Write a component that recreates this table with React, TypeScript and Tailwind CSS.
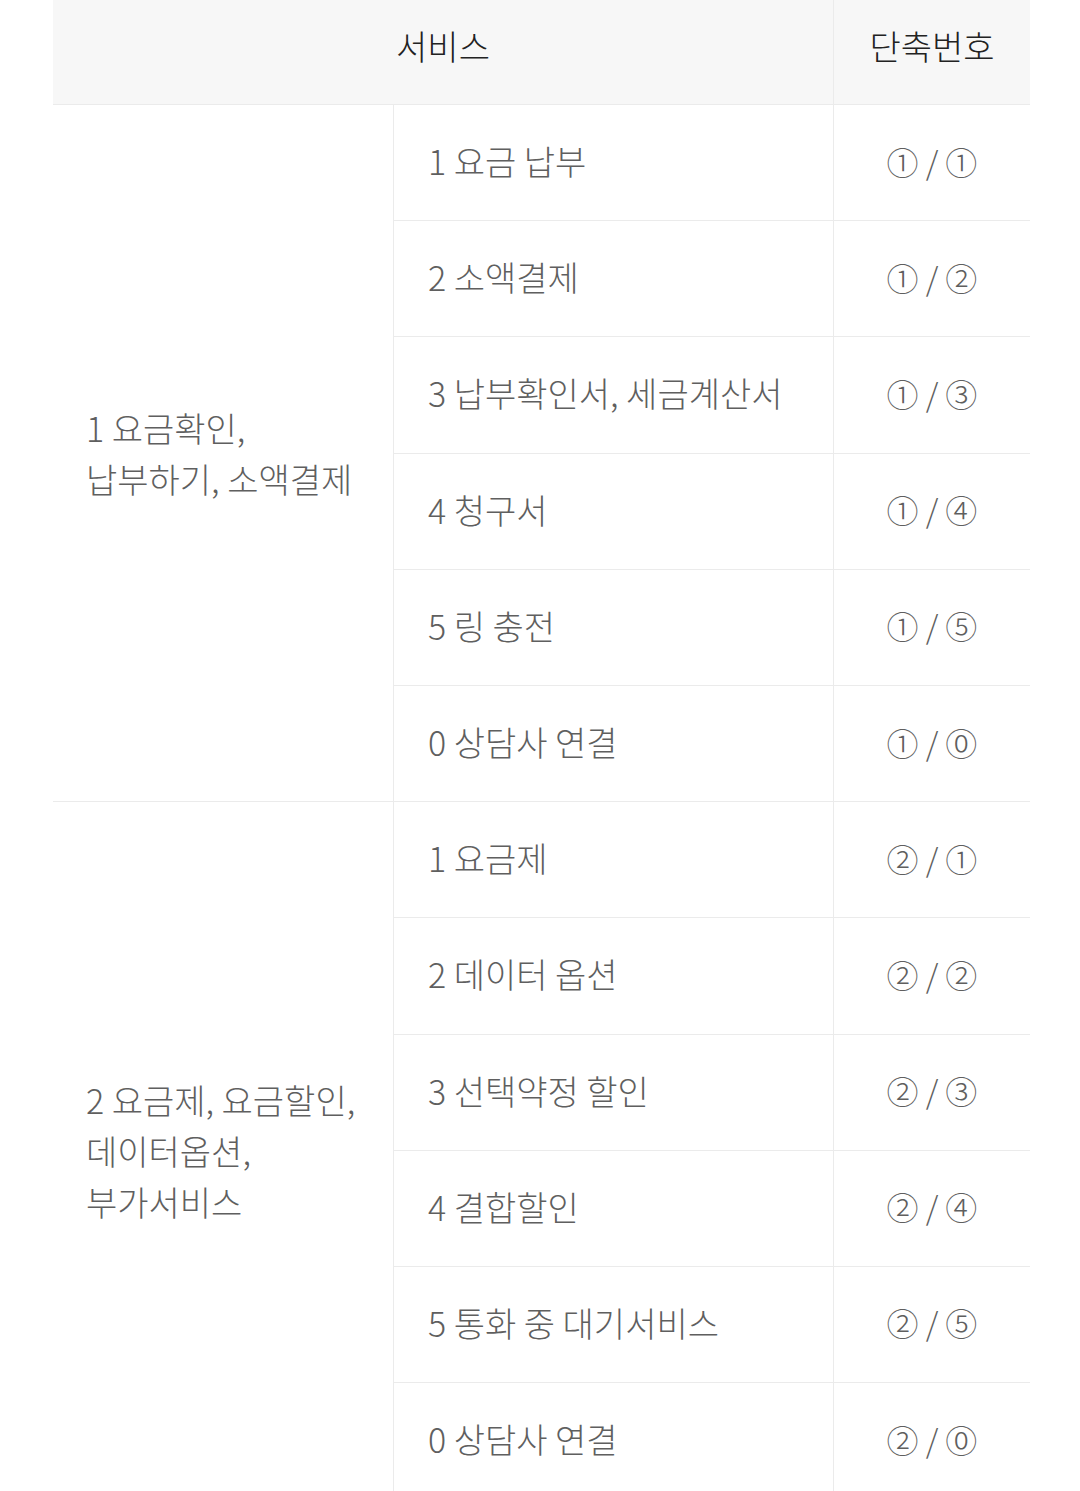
type Row = {
  label: string;
  code: string;
};

type Group = {
  title: string[];
  rows: Row[];
};

const groups: Group[] = [
  {
    title: ["1 요금확인,", "납부하기, 소액결제"],
    rows: [
      { label: "1 요금 납부", code: "① / ①" },
      { label: "2 소액결제", code: "① / ②" },
      { label: "3 납부확인서, 세금계산서", code: "① / ③" },
      { label: "4 청구서", code: "① / ④" },
      { label: "5 링 충전", code: "① / ⑤" },
      { label: "0 상담사 연결", code: "① / ⓪" },
    ],
  },
  {
    title: ["2 요금제, 요금할인,", "데이터옵션,", "부가서비스"],
    rows: [
      { label: "1 요금제", code: "② / ①" },
      { label: "2 데이터 옵션", code: "② / ②" },
      { label: "3 선택약정 할인", code: "② / ③" },
      { label: "4 결합할인", code: "② / ④" },
      { label: "5 통화 중 대기서비스", code: "② / ⑤" },
      { label: "0 상담사 연결", code: "② / ⓪" },
    ],
  },
];

const font = {
  fontFamily: '"Noto Sans CJK KR", "Noto Sans", sans-serif',
};

const App = () => {
  return (
    <div className="min-h-screen bg-white px-[53px]" style={font}>
      <div className="grid w-[977px] grid-cols-[341px_440px_196px]">
        <div className="col-span-2 flex h-[105px] items-center justify-center border-r border-b border-[#ebebeb] bg-[#f7f7f7] pb-[14px] text-[34px] font-light text-[#222]">
          서비스
        </div>
        <div className="flex h-[105px] items-center justify-center border-b border-[#ebebeb] bg-[#f7f7f7] pb-[14px] text-[34px] font-light text-[#222]">
          단축번호
        </div>

        {groups.map((group, gi) => (
          <div key={gi} className="contents">
            <div
              className={`row-span-6 flex items-center border-r border-[#ebebeb] px-[33px] text-[34px] leading-[51px] font-light text-[#5f5f5f] ${
                gi === 0 ? "border-b" : ""
              }`}
            >
              <div>
                {group.title.map((line) => (
                  <div key={line}>{line}</div>
                ))}
              </div>
            </div>
            {group.rows.map((row, ri) => (
              <div key={ri} className="contents">
                <div className="flex h-[116.2px] items-center border-r border-b border-[#ebebeb] px-[34px] pb-[4px] text-[34px] font-light text-[#5f5f5f]">
                  {row.label}
                </div>
                <div className="flex h-[116.2px] items-center justify-center border-b border-[#ebebeb] pb-[4px] text-[32px] font-light text-[#5f5f5f]">
                  {row.code}
                </div>
              </div>
            ))}
          </div>
        ))}
      </div>
    </div>
  );
};

export default App;
